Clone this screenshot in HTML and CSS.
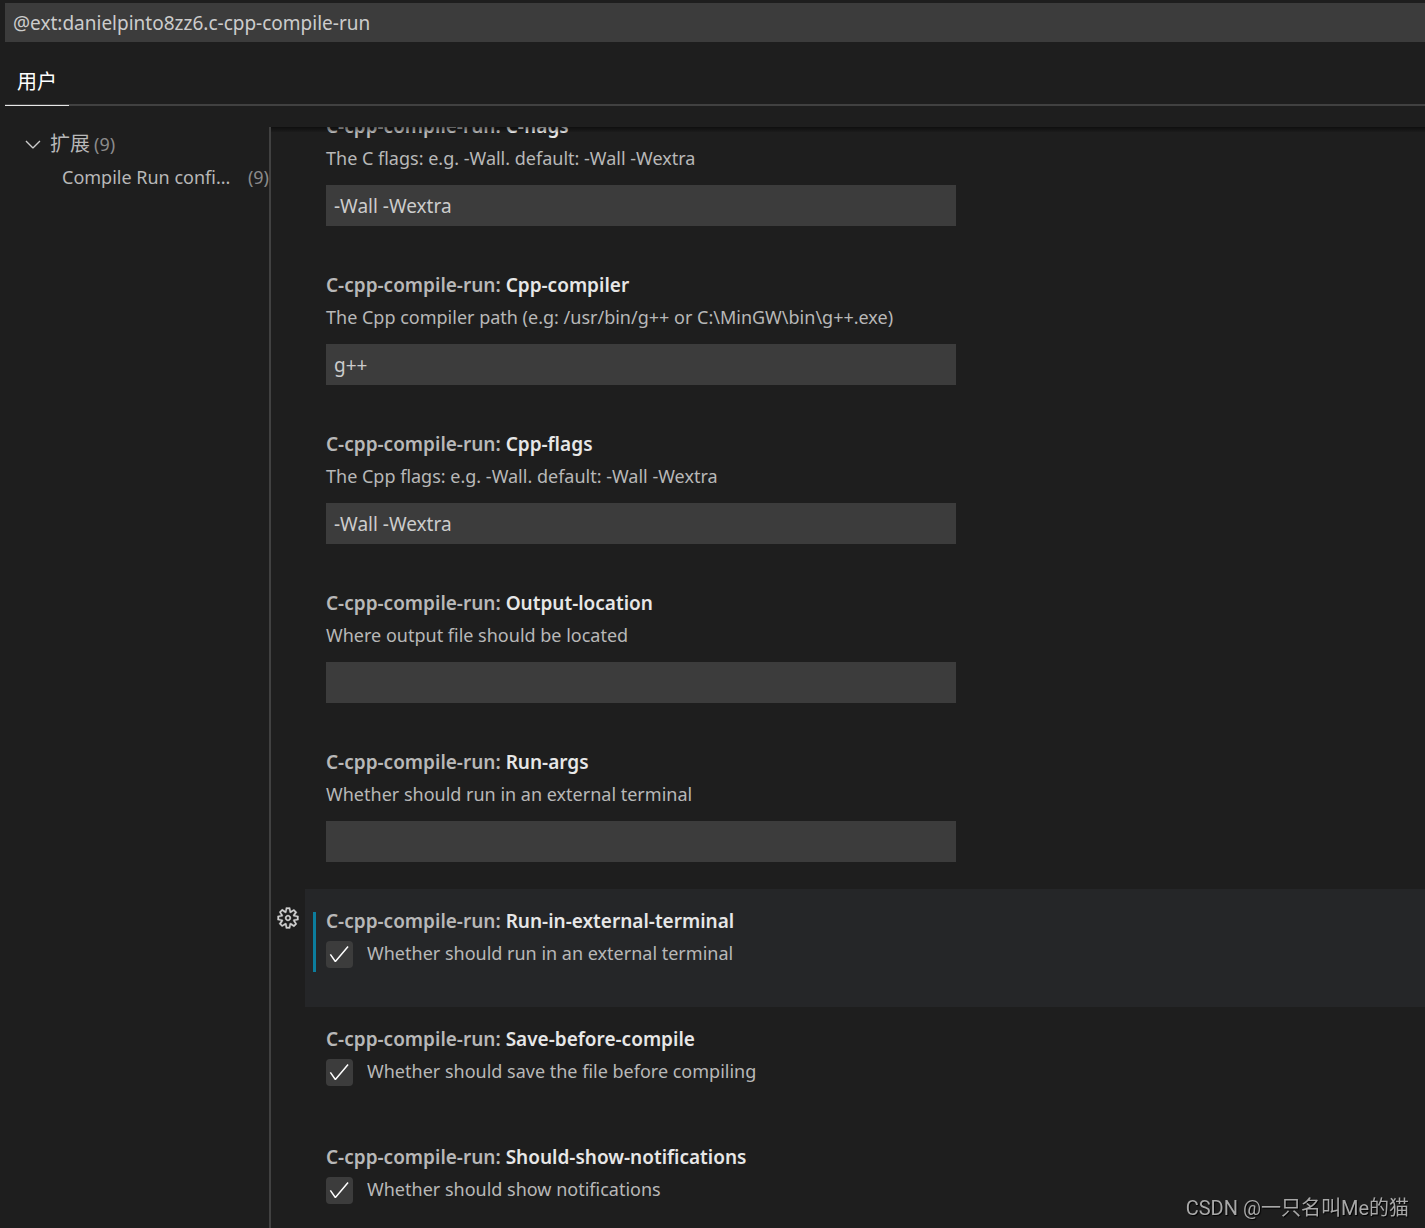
FILE: index.html
```html
<!DOCTYPE html>
<html lang="zh-CN">
<head>
    <meta charset="UTF-8">
    <meta name="viewport" content="width=device-width, initial-scale=1.0">
    <title>设置</title>
    <link rel="stylesheet" href="styles.css">
</head>
<body>
    <div class="settings-editor">
        <header class="settings-header">
            <input class="search-input" type="text" aria-label="搜索设置" value="@ext:danielpinto8zz6.c-cpp-compile-run">
            <div class="tabs">
                <button class="tab" type="button">用户</button>
            </div>
        </header>

        <div class="settings-body">
            <nav class="toc">
                <a class="toc-row" href="#settings">
                    <svg class="chevron" viewBox="0 0 16 16"><path d="M7.976 10.072l4.357-4.357.62.618L8.284 11h-.618L3 6.333l.619-.618 4.357 4.357z"/></svg>
                    <span class="toc-label">扩展</span>
                    <span class="toc-count">(9)</span>
                </a>
                <a class="toc-row toc-child" href="#settings">
                    <span class="toc-label">Compile Run confi...</span>
                    <span class="toc-count">(9)</span>
                </a>
            </nav>

            <main class="settings-list" id="settings">
                <div class="setting">
                    <div class="setting-content">
                        <h2><span>C-cpp-compile-run:</span> C-flags</h2>
                        <label for="c-flags">The C flags: e.g. -Wall. default: -Wall -Wextra</label>
                        <input class="text-input" id="c-flags" type="text" value="-Wall -Wextra">
                    </div>
                </div>
                <div class="setting">
                    <div class="setting-content">
                        <h2><span>C-cpp-compile-run:</span> Cpp-compiler</h2>
                        <label for="cpp-compiler">The Cpp compiler path (e.g: /usr/bin/g++ or C:\MinGW\bin\g++.exe)</label>
                        <input class="text-input" id="cpp-compiler" type="text" value="g++">
                    </div>
                </div>
                <div class="setting">
                    <div class="setting-content">
                        <h2><span>C-cpp-compile-run:</span> Cpp-flags</h2>
                        <label for="cpp-flags">The Cpp flags: e.g. -Wall. default: -Wall -Wextra</label>
                        <input class="text-input" id="cpp-flags" type="text" value="-Wall -Wextra">
                    </div>
                </div>
                <div class="setting">
                    <div class="setting-content">
                        <h2><span>C-cpp-compile-run:</span> Output-location</h2>
                        <label for="output-location">Where output file should be located</label>
                        <input class="text-input" id="output-location" type="text">
                    </div>
                </div>
                <div class="setting">
                    <div class="setting-content">
                        <h2><span>C-cpp-compile-run:</span> Run-args</h2>
                        <label for="run-args">Whether should run in an external terminal</label>
                        <input class="text-input" id="run-args" type="text">
                    </div>
                </div>
                <div class="setting focused">
                    <button class="gear" type="button" aria-label="更多操作">
                        <svg viewBox="0 0 16 16"><path fill-rule="evenodd" d="M9.1 4.4L8.6 2H7.4l-.5 2.4-.7.3-2-1.3-.9.8 1.3 2-.2.7-2.4.5v1.2l2.4.5.3.8-1.3 2 .8.8 2-1.3.8.3.4 2.3h1.2l.5-2.4.8-.3 2 1.3.8-.8-1.3-2 .3-.8 2.3-.4V7.4l-2.4-.5-.3-.8 1.3-2-.8-.8-2 1.3-.7-.2zM9.4 1l.5 2.4L12 2.1l2 2-1.4 2.1 2.4.4v2.8l-2.4.5L14 12l-2 2-2.1-1.4-.5 2.4H6.6l-.5-2.4L4 13.9l-2-2 1.4-2.1L1 9.4V6.6l2.4-.5L2.1 4l2-2 2.1 1.4.4-2.4h2.8zm.6 7c0 1.1-.9 2-2 2s-2-.9-2-2 .9-2 2-2 2 .9 2 2zM8 9c.6 0 1-.4 1-1s-.4-1-1-1-1 .4-1 1 .4 1 1 1z"/></svg>
                    </button>
                    <div class="setting-content modified">
                        <h2><span>C-cpp-compile-run:</span> Run-in-external-terminal</h2>
                        <div class="check-row">
                            <input class="checkbox" id="run-external" type="checkbox" checked>
                            <label for="run-external">Whether should run in an external terminal</label>
                        </div>
                    </div>
                </div>
                <div class="setting">
                    <div class="setting-content">
                        <h2><span>C-cpp-compile-run:</span> Save-before-compile</h2>
                        <div class="check-row">
                            <input class="checkbox" id="save-before" type="checkbox" checked>
                            <label for="save-before">Whether should save the file before compiling</label>
                        </div>
                    </div>
                </div>
                <div class="setting">
                    <div class="setting-content">
                        <h2><span>C-cpp-compile-run:</span> Should-show-notifications</h2>
                        <div class="check-row">
                            <input class="checkbox" id="show-notifications" type="checkbox" checked>
                            <label for="show-notifications">Whether should show notifications</label>
                        </div>
                    </div>
                </div>
            </main>
        </div>
    </div>
    <div class="watermark">CSDN @一只名叫Me的猫</div>
</body>
</html>
```

FILE: styles.css
```css
:root {
    --bg: #1e1e1e;
    --input-bg: #3c3c3c;
    --border: #414141;
    --text: #b8b8b8;
    --input-text: #cccccc;
    --heading: #e7e7e7;
    --modified: #0c7d9d;
}

* {
    margin: 0;
    padding: 0;
    box-sizing: border-box;
}

body {
    background: var(--bg);
    color: var(--text);
    font-family: 'Noto Sans', 'Noto Sans CJK SC', sans-serif;
    font-size: 18px;
    line-height: 24px;
    overflow: hidden;
}

input,
button {
    font: inherit;
    color: inherit;
    border: none;
    outline: none;
}

.settings-editor {
    display: flex;
    flex-direction: column;
    height: 100vh;
    padding: 3px 0 0 5px;
}

.search-input {
    display: block;
    width: 100%;
    height: 39px;
    padding: 0 8px;
    background: var(--input-bg);
    color: var(--input-text);
    font-size: 19px;
}

.tabs {
    display: flex;
    margin-top: 14px;
    border-bottom: 2px solid var(--border);
}

.tab {
    height: 50px;
    padding: 2px 12px 0;
    margin-bottom: -2px;
    background: none;
    border-bottom: 1px solid var(--heading);
    color: #ffffff;
    font-size: 20px;
}

.settings-body {
    display: flex;
    flex: 1;
    min-height: 0;
    margin-top: 21px;
}

.toc {
    width: 266px;
    flex-shrink: 0;
    border-right: 2px solid var(--border);
}

.toc-row {
    display: flex;
    align-items: center;
    height: 33px;
    padding-left: 16px;
    color: var(--text);
    text-decoration: none;
}

.toc-label {
    font-size: 20px;
}

.toc-child {
    justify-content: space-between;
    padding-left: 57px;
}

.toc-child .toc-label {
    font-size: 18px;
}

.chevron {
    width: 24px;
    height: 24px;
    margin-right: 5px;
    fill: var(--input-text);
}

.toc-count {
    margin-left: 4px;
    color: #8b8b8b;
}

.settings-list {
    flex: 1;
    position: relative;
    overflow: hidden;
}

/* scroll shadow under the header */
.settings-list::before {
    content: '';
    position: absolute;
    top: 0;
    left: 0;
    right: 0;
    height: 5px;
    background: linear-gradient(rgba(0, 0, 0, 0.5), rgba(0, 0, 0, 0.1));
    z-index: 1;
}

/* list is scrolled partway through the first item */
.setting:first-child {
    margin-top: -33px;
}

.setting {
    display: grid;
    grid-template-columns: 34px 1fr;
}

.setting-content {
    grid-column: 2;
    position: relative;
    padding: 20px 21px 27px;
}

.focused .setting-content {
    background: #252628;
}

.modified::before {
    content: '';
    position: absolute;
    top: 23px;
    left: 8px;
    width: 3px;
    height: 60px;
    background: var(--modified);
}

h2 {
    margin-bottom: 8px;
    color: var(--heading);
    font-size: 19px;
    font-weight: 600;
}

h2 span {
    color: var(--text);
}

.setting-content label {
    display: block;
}

.text-input {
    display: block;
    width: 100%;
    max-width: 630px;
    height: 41px;
    margin-top: 15px;
    padding: 0 8px;
    background: var(--input-bg);
    color: var(--input-text);
    font-size: 19px;
}

.check-row {
    display: flex;
    gap: 14px;
    padding-bottom: 12px;
}

.checkbox {
    appearance: none;
    width: 27px;
    height: 27px;
    border-radius: 4px;
    background: var(--input-bg);
}

.checkbox:checked {
    background: var(--input-bg) url("data:image/svg+xml,%3Csvg xmlns='http://www.w3.org/2000/svg' viewBox='0 0 16 16'%3E%3Cpath fill='%23ffffff' d='M14.431 3.323l-8.47 10-.79-.036-3.35-4.77.818-.574 2.978 4.24 8.051-9.506.764.646z'/%3E%3C/svg%3E") 1px 1px / 24px 24px no-repeat;
}

.gear {
    align-self: start;
    justify-self: center;
    height: 24px;
    margin-top: 17px;
    background: none;
}

.gear svg {
    display: block;
    width: 24px;
    height: 24px;
    fill: #d0d0d0;
    stroke: #d0d0d0;
    stroke-width: 0.2;
}

.watermark {
    position: fixed;
    right: 16px;
    bottom: 8px;
    color: #a8a8a8;
    font-family: Roboto, 'Noto Sans CJK SC', sans-serif;
    font-size: 20px;
    text-shadow: 1px 1px 1px #000000;
}
```
